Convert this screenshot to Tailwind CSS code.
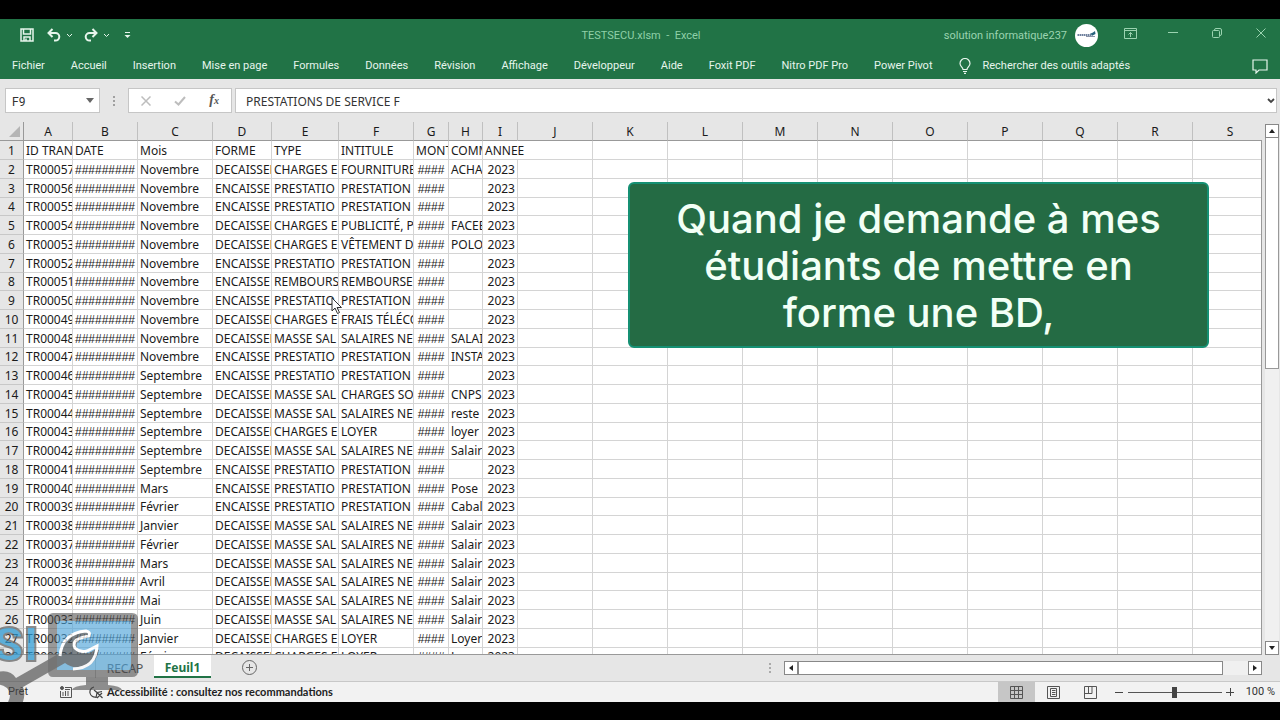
<!DOCTYPE html>
<html lang="fr">
<head>
    <meta charset="UTF-8">
    <meta name="viewport" content="width=device-width, initial-scale=1.0">
    <title>TESTSECU.xlsm - Excel</title>
    <script src="https://cdn.jsdelivr.net/npm/@tailwindcss/browser@4"></script>
</head>
<body class="relative h-screen overflow-hidden flex flex-col bg-black pb-[18px] pt-[19px] font-['Roboto',sans-serif] text-[11px] text-[#333]">

    <!-- Title bar and ribbon tabs -->
    <header class="shrink-0 bg-[#217346] text-[#e6f5ec]">
        <div class="relative flex h-8 items-center justify-between pl-5">
            <div class="flex items-center">
                <button aria-label="Enregistrer" class="mr-3">
                    <svg class="size-[14px]" viewBox="0 0 14 14" fill="none" stroke="currentColor" stroke-width="1.5"><path d="M1 1h12v12H1zM3.5 1v5h7V1M4 13V9h6v4M6 10.500v2.500"/></svg>
                </button>
                <button aria-label="Annuler" class="mr-1">
                    <svg class="w-[16px] h-[14px]" viewBox="0 0 16 14" fill="none" stroke="currentColor" stroke-width="2"><path d="M2 5h7.500a3.800 3.800 0 0 1 0 7.600H8M6.500 1 2.500 5l4 4"/></svg>
                </button>
                <button aria-label="Options d'annulation" class="mr-[10px]">
                    <svg class="w-[7px] h-[5px]" viewBox="0 0 7 5" fill="none" stroke="currentColor"><path d="m1 1 2.500 2.500L6 1"/></svg>
                </button>
                <button aria-label="Rétablir" class="mr-1">
                    <svg class="w-[16px] h-[14px]" viewBox="0 0 16 14" fill="none" stroke="currentColor" stroke-width="2"><path d="M14 5H6.500a3.800 3.800 0 0 0 0 7.600H8M9.500 1l4 4-4 4"/></svg>
                </button>
                <button aria-label="Options de rétablissement" class="mr-[14px]">
                    <svg class="w-[7px] h-[5px]" viewBox="0 0 7 5" fill="none" stroke="currentColor"><path d="m1 1 2.500 2.500L6 1"/></svg>
                </button>
                <button aria-label="Personnaliser la barre">
                    <svg class="w-[7px] h-[7px]" viewBox="0 0 7 7"><path d="M1 .5h5" stroke="currentColor"/><path d="M.5 3h6l-3 3z" fill="currentColor"/></svg>
                </button>
            </div>
            <h1 class="absolute inset-x-0 pt-[3px] pl-[2px] text-center whitespace-pre text-[#8fd0a8] pointer-events-none">TESTSECU.xlsm  -  Excel</h1>
            <div class="flex items-center text-[#9bd3b0]">
                <span class="pt-[3px]">solution informatique237</span>
                <svg class="ml-2 mr-[26px] size-[23px]" viewBox="0 0 23 23"><circle cx="11.500" cy="11.500" r="11.500" fill="#fff"/><path d="M2.500 11h15" stroke="#6d7f9c" stroke-width="2" stroke-dasharray="1.500 .5"/><path d="M11 12.500h9" stroke="#8b94a8" stroke-width="1"/><path d="M15 9.500c2 0 3-1 5-2.500l.5 3-3 1.500z" fill="#27627c"/></svg>
                <button aria-label="Options d'affichage du ruban" class="mr-[31px]">
                    <svg class="mb-1 w-[13px] h-[11px]" viewBox="0 0 13 11" fill="none" stroke="currentColor"><path d="M.5.5h12v10H.5zM.5 2.500h12M6.500 9V4.500M4.500 6.500l2-2 2 2"/></svg>
                </button>
                <button aria-label="Réduire" class="mr-[34px]">
                    <svg class="mb-1 w-[10px] h-[10px]" viewBox="0 0 10 10" stroke="currentColor"><path d="M0 4.500h10"/></svg>
                </button>
                <button aria-label="Restaurer" class="mr-[34px]">
                    <svg class="mb-1 w-[10px] h-[10px]" viewBox="0 0 10 10" fill="none" stroke="currentColor"><rect x=".5" y="2.500" width="7" height="7" rx="1"/><path d="M2.500 2.500V2A1.500 1.500 0 0 1 4 .5h4A1.500 1.500 0 0 1 9.500 2v4A1.500 1.500 0 0 1 8 7.500"/></svg>
                </button>
                <button aria-label="Fermer" class="mr-[14px]">
                    <svg class="mb-1 w-[10px] h-[10px]" viewBox="0 0 10 10" stroke="currentColor"><path d="m.5.5 9 9m0-9-9 9"/></svg>
                </button>
            </div>
        </div>
        <nav class="flex h-7 items-center justify-between pl-3 pr-3 pt-[2px]">
            <div class="flex items-center gap-[26px] whitespace-nowrap">
                <button>Fichier</button>
                <button>Accueil</button>
                <button>Insertion</button>
                <button>Mise en page</button>
                <button>Formules</button>
                <button>Données</button>
                <button>Révision</button>
                <button>Affichage</button>
                <button>Développeur</button>
                <button>Aide</button>
                <button>Foxit PDF</button>
                <button>Nitro PDF Pro</button>
                <button>Power Pivot</button>
                <button class="flex items-center gap-3">
                    <svg class="w-[12px] h-[16px]" viewBox="0 0 12 16" fill="none" stroke="currentColor" stroke-width="1.200"><path d="M4 11.500C4 9 1 8.500 1 5.500a5 5 0 0 1 10 0C11 8.500 8 9 8 11.500zM4 13.500h4M5 15.300h2"/></svg>
                    Rechercher des outils adaptés
                </button>
            </div>
            <button aria-label="Commentaires">
                <svg class="w-[16px] h-[15px]" viewBox="0 0 16 15" fill="none" stroke="currentColor" stroke-width="1.200"><path d="M1 1h14v10H7l-3 3v-3H1z"/></svg>
            </button>
        </nav>
    </header>

    <!-- Formula bar -->
    <div class="flex shrink-0 h-[43px] items-center bg-[#e6e6e6] pl-[5px] pr-[3px]">
        <div class="flex h-[25px] w-[95px] items-center border border-[#c6c6c6] bg-white pr-[5px]">
            <input aria-label="Zone Nom" value="F9" class="w-full min-w-0 pt-[2px] pl-[6px] text-[12px] outline-none">
            <svg class="w-[8px] h-[5px] shrink-0" viewBox="0 0 8 5"><path d="M0 0h8L4 5z" fill="#666"/></svg>
        </div>
        <svg class="mx-3 w-[4px] h-[10px]" viewBox="0 0 4 10" fill="#a0a0a0"><path d="M1 0h2v2H1zM1 4h2v2H1zM1 8h2v2H1z"/></svg>
        <div class="flex h-[25px] w-[104px] items-center justify-between border border-[#c6c6c6] bg-white pl-3 pr-3">
            <button aria-label="Annuler la saisie"><svg class="size-[10px]" viewBox="0 0 10 10" stroke="#bdbdbd" stroke-width="1.500"><path d="m.5.5 9 9m0-9-9 9"/></svg></button>
            <button aria-label="Valider"><svg class="w-[12px] h-[10px]" viewBox="0 0 12 10" fill="none" stroke="#bdbdbd" stroke-width="2"><path d="m1 5.500 3.500 3L11 1"/></svg></button>
            <button aria-label="Insérer une fonction" class="font-['Liberation_Serif',serif] text-sm leading-4 font-bold italic text-[#555]">f<span class="text-[10px]">x</span></button>
        </div>
        <div class="ml-[3px] flex h-[25px] flex-1 items-center border border-[#c6c6c6] bg-white pr-[1px]">
            <input aria-label="Barre de formule" value="PRESTATIONS DE SERVICE F" class="w-full min-w-0 pt-[2px] pl-[10px] font-['Noto_Sans',sans-serif] text-[12px] outline-none">
            <svg class="w-[8px] h-[6px] shrink-0" viewBox="0 0 8 6" fill="none" stroke="#444" stroke-width="1.800"><path d="m1 1 3 3 3-3"/></svg>
        </div>
    </div>

    <!-- Worksheet -->
    <main class="flex min-h-0 flex-1 bg-[#e6e6e6]">
        <div class="relative min-w-0 flex-1 overflow-hidden border-b border-[#999]">
            <table class="w-[1268px] min-w-full table-fixed border-separate border-spacing-0 font-['Noto_Sans',sans-serif] text-[12px] leading-[16px] whitespace-nowrap text-[#1a1a1a]">
                <colgroup>
                    <col class="w-[24px]"><col class="w-[49px]"><col class="w-[65px]"><col class="w-[75px]"><col class="w-[59px]"><col class="w-[67px]"><col class="w-[75px]"><col class="w-[35px]"><col class="w-[34px]"><col class="w-[35px]"><col class="w-[75px]"><col class="w-[75px]"><col class="w-[75px]"><col class="w-[75px]"><col class="w-[75px]"><col class="w-[75px]"><col class="w-[75px]"><col class="w-[75px]"><col class="w-[75px]"><col class="w-[75px]">
                </colgroup>
                <thead>
                    <tr id="columns"></tr>
                </thead>
                <tbody id="cells"></tbody>
            </table>
            <div class="absolute top-[19px] right-0 bottom-0 w-px bg-[#999]"></div>
        </div>
        <div class="flex w-[18px] flex-col bg-[#e6e6e6] pt-[2px] pl-[3px] pr-px">
            <button aria-label="Défiler vers le haut" class="flex h-[14px] shrink-0 items-center justify-center border border-[#888] bg-white"><svg class="w-[6px] h-[4px]" viewBox="0 0 6 4"><path d="M3 0 6 4H0z" fill="#222"/></svg></button>
            <div class="flex-1 bg-[#f0f0f0]"><div class="h-[46%] border border-t-0 border-[#999] bg-white"></div></div>
            <button aria-label="Défiler vers le bas" class="flex h-[14px] shrink-0 items-center justify-center border border-[#888] bg-white"><svg class="w-[6px] h-[4px]" viewBox="0 0 6 4"><path d="M0 0h6L3 4z" fill="#222"/></svg></button>
        </div>
    </main>

    <!-- Sheet tabs and horizontal scroll bar -->
    <div class="flex h-[26px] shrink-0 items-start bg-[#e6e6e6]">
        <div class="flex flex-1 items-start font-['Noto_Sans',sans-serif] text-[12px]">
            <button class="ml-[95px] h-[23px] w-[59px] border-l border-[#bbb] pt-[4px] text-[#555]">RECAP</button>
            <button class="h-[23px] w-[57px] border-b-2 border-[#217346] bg-white pt-[4px] font-bold text-[#217346]">Feuil1</button>
            <button aria-label="Nouvelle feuille" class="ml-[31px] mt-[5px]"><svg class="size-[15px]" viewBox="0 0 15 15" fill="none" stroke="#666"><circle cx="7.500" cy="7.500" r="7"/><path d="M7.500 4v7M4 7.500h7"/></svg></button>
        </div>
        <svg class="mt-2 mr-[13px] w-[2px] h-[10px]" viewBox="0 0 2 10" fill="#aaa"><path d="M0 0h2v2H0zM0 4h2v2H0zM0 8h2v2H0z"/></svg>
        <div class="mt-[6px] mr-[18px] flex h-[14px] w-[478px] bg-[#f0f0f0]">
            <button aria-label="Défiler à gauche" class="flex w-[14px] items-center justify-center border border-[#888] bg-white"><svg class="w-[4px] h-[6px]" viewBox="0 0 4 6"><path d="M4 0v6L0 3z" fill="#222"/></svg></button>
            <div class="w-[425px] border border-[#888] bg-white"></div>
            <button aria-label="Défiler à droite" class="ml-auto flex w-[14px] items-center justify-center border border-[#888] bg-white"><svg class="w-[4px] h-[6px]" viewBox="0 0 4 6"><path d="M0 0v6l4-3z" fill="#222"/></svg></button>
        </div>
    </div>

    <!-- Status bar -->
    <footer class="flex h-[21px] shrink-0 items-center border-t border-[#c8c8c8] bg-[#f2f2f2] pl-2">
        <span class="w-[52px]">Prêt</span>
        <svg class="mr-[17px] w-[12px] h-[12px]" viewBox="0 0 12 12" fill="none" stroke="#555"><circle cx="2" cy="2" r="1.500" fill="#555"/><path d="M5 1.500h6.500v10H.5V5M3 6v4M5.500 5v5M8 5v5M5 3.500h5"/></svg>
        <svg class="mr-[3px] w-[15px] h-[13px]" viewBox="0 0 15 13" fill="none" stroke="#444" stroke-width="1.200"><path d="M5 1a5 5 0 0 0 2 10M5 4l3 2.500 5-1M8 6.500 7 12M8.500 7l5 5M13 7l-5 5" /></svg>
        <button class="flex-1 text-left font-['Lato',sans-serif] font-bold text-[#222]">Accessibilité : consultez nos recommandations</button>
        <button aria-label="Normal" class="flex h-full w-[37px] items-center justify-center bg-[#c6c6c6]"><svg class="size-[13px]" viewBox="0 0 13 13" fill="none" stroke="#555"><path d="M.5.5h12v12H.5zM4.500.5v12M8.500.5v12M.5 4.500h12M.5 8.500h12"/></svg></button>
        <button aria-label="Mise en page" class="flex h-full w-[37px] items-center justify-center"><svg class="size-[13px]" viewBox="0 0 13 13" fill="none" stroke="#555"><path d="M.5.5h12v12H.5zM3.500 2.500h6v8h-6zM5 4.500h3.500M5 6.500h3.500M5 8.500h3.500"/></svg></button>
        <button aria-label="Aperçu des sauts de page" class="flex h-full w-[38px] items-center justify-center"><svg class="size-[13px]" viewBox="0 0 13 13" fill="none" stroke="#555"><path d="M.5.5h12v12H.5zM.5 7.500h7.500v-7M4.500.5v7"/></svg></button>
        <button aria-label="Zoom arrière" class="ml-[5px] mr-[5px]"><svg class="size-[8px]" viewBox="0 0 8 8" stroke="#444"><path d="M0 4.500h8"/></svg></button>
        <input type="range" aria-label="Zoom" min="0" max="200" value="100" class="h-[12px] w-[94px] appearance-none bg-[linear-gradient(#555,#555)] bg-[length:100%_1px] bg-center bg-no-repeat [&::-webkit-slider-thumb]:h-[11px] [&::-webkit-slider-thumb]:w-[5px] [&::-webkit-slider-thumb]:appearance-none [&::-webkit-slider-thumb]:bg-[#444]">
        <button aria-label="Zoom avant" class="ml-[4px] mr-3"><svg class="size-[8px]" viewBox="0 0 8 8" stroke="#444"><path d="M0 4.500h8M4.500 0v8"/></svg></button>
        <span class="mr-[5px] whitespace-nowrap">100 %</span>
    </footer>

    <!-- Caption -->
    <div class="absolute top-[182px] left-[628px] flex h-[166px] w-[581px] items-center justify-center rounded-md border-2 border-[#159073] bg-[#246b44] text-center font-['Inter',sans-serif] text-[40px] font-medium leading-[47px] text-[#f2fff6]">
        <p>Quand je demande à mes<br>étudiants de mettre en<br>forme une BD,</p>
    </div>

    <!-- Mouse pointer -->
    <svg class="absolute top-[297px] left-[331px] w-[12px] h-[18px]" viewBox="0 0 12 18"><path d="M1 1v13l3-3 2.500 5.500 2-1L6 10.500h4.500z" fill="#fff" stroke="#333"/></svg>

    <!-- Channel logo -->
    <svg class="pointer-events-none absolute bottom-[18px] left-0 h-[92px] w-[140px] opacity-75" viewBox="0 610 140 92">
        <path fill-rule="evenodd" d="M53 613h79q6 0 6 6v52q0 6-6 6H53q-5 0-5-6v-52q0-6 5-6zM57 621v49h74v-49z" fill="#4a4a4a" fill-opacity=".75"/>
        <path d="M57 621h74v49H57z" fill="#4ea3d8" fill-opacity=".85"/>
        <path d="M86 677h22v8q13 1 14 5H72q1-4 14-5z" fill="#4a4a4a" fill-opacity=".8"/>
        <path d="M-2 672q12-3 18 6l44-25q5-20 27-22 4 1 3 5-16 4-13 12 6 8 14 4l5-3 3 1q-3 16-20 17-8 1-14-4l-42 24q3 9-1 17h-15q6-10 0-16-5-4-9-3z" fill="#4a4a4a" fill-opacity=".85"/>
        <path d="M60 656q2-23 26-25 5 1 3 5-19 3-14 12 5 5 12 3l10-5q-1 22-24 23" fill="none" stroke="#fff" stroke-width="3"/>
        <text x="-7" y="661" font-family="Roboto, sans-serif" font-weight="900" font-size="49" fill="#2f9ad2" stroke="#666" stroke-width="2">SI</text>
    </svg>

    <script>
        // date and amount columns are too narrow, so they show as hashes
        const rows = [
            ['TR00057', 'Novembre', 'DECAISSEMENT', 'CHARGES E', 'FOURNITURE', 'ACHA'],
            ['TR00056', 'Novembre', 'ENCAISSE', 'PRESTATIO', 'PRESTATION', ''],
            ['TR00055', 'Novembre', 'ENCAISSE', 'PRESTATIO', 'PRESTATION', ''],
            ['TR00054', 'Novembre', 'DECAISSEMENT', 'CHARGES E', 'PUBLICITÉ, P', 'FACEB'],
            ['TR00053', 'Novembre', 'DECAISSEMENT', 'CHARGES E', 'VÊTEMENT D', 'POLO'],
            ['TR00052', 'Novembre', 'ENCAISSE', 'PRESTATIO', 'PRESTATION', ''],
            ['TR00051', 'Novembre', 'ENCAISSE', 'REMBOURS', 'REMBOURSE', ''],
            ['TR00050', 'Novembre', 'ENCAISSE', 'PRESTATIO', 'PRESTATION', ''],
            ['TR00049', 'Novembre', 'DECAISSEMENT', 'CHARGES E', 'FRAIS TÉLÉCO', ''],
            ['TR00048', 'Novembre', 'DECAISSEMENT', 'MASSE SAL', 'SALAIRES NE', 'SALAI'],
            ['TR00047', 'Novembre', 'ENCAISSE', 'PRESTATIO', 'PRESTATION', 'INSTA'],
            ['TR00046', 'Septembre', 'ENCAISSE', 'PRESTATIO', 'PRESTATION', ''],
            ['TR00045', 'Septembre', 'DECAISSEMENT', 'MASSE SAL', 'CHARGES SO', 'CNPS'],
            ['TR00044', 'Septembre', 'DECAISSEMENT', 'MASSE SAL', 'SALAIRES NE', 'reste'],
            ['TR00043', 'Septembre', 'DECAISSEMENT', 'CHARGES E', 'LOYER', 'loyer'],
            ['TR00042', 'Septembre', 'DECAISSEMENT', 'MASSE SAL', 'SALAIRES NE', 'Salair'],
            ['TR00041', 'Septembre', 'ENCAISSE', 'PRESTATIO', 'PRESTATION', ''],
            ['TR00040', 'Mars', 'ENCAISSE', 'PRESTATIO', 'PRESTATION', 'Pose'],
            ['TR00039', 'Février', 'ENCAISSE', 'PRESTATIO', 'PRESTATION', 'Cabal'],
            ['TR00038', 'Janvier', 'DECAISSEMENT', 'MASSE SAL', 'SALAIRES NE', 'Salair'],
            ['TR00037', 'Février', 'DECAISSEMENT', 'MASSE SAL', 'SALAIRES NE', 'Salair'],
            ['TR00036', 'Mars', 'DECAISSEMENT', 'MASSE SAL', 'SALAIRES NE', 'Salair'],
            ['TR00035', 'Avril', 'DECAISSEMENT', 'MASSE SAL', 'SALAIRES NE', 'Salair'],
            ['TR00034', 'Mai', 'DECAISSEMENT', 'MASSE SAL', 'SALAIRES NE', 'Salair'],
            ['TR00033', 'Juin', 'DECAISSEMENT', 'MASSE SAL', 'SALAIRES NE', 'Salair'],
            ['TR00032', 'Janvier', 'DECAISSEMENT', 'CHARGES E', 'LOYER', 'Loyer'],
            ['TR00031', 'Février', 'DECAISSEMENT', 'CHARGES E', 'LOYER', 'Loyer'],
        ];

        const letters = 'ABCDEFGHIJKLMNOPQRS'.split('');
        const corner = '<th class="h-[19px] border-r border-b border-[#999] p-0"><svg class="ml-auto mr-[3px] block size-[11px]" viewBox="0 0 11 11"><path d="M11 0v11H0z" fill="#b5b5b5"/></svg></th>';
        document.getElementById('columns').innerHTML = corner + letters.map(l =>
            `<th scope="col" class="h-[19px] border-r border-b border-r-[#c0c0c0] border-b-[#999] bg-[#e6e6e6] p-0 pt-[2px] font-normal">${l}</th>`).join('');

        const cell = 'overflow-hidden border-r border-b border-[#d4d4d4] bg-white p-0 pt-px pl-[2px]';
        const hash = "overflow-hidden border-r border-b border-[#d4d4d4] bg-white p-0 pt-px text-center font-['Liberation_Sans',sans-serif]";
        const year = 'overflow-hidden border-r border-b border-[#d4d4d4] bg-white p-0 pt-px pr-[2px] text-right';
        const spill = 'relative overflow-visible border-b border-[#d4d4d4] bg-white p-0 pt-px pl-[2px]';
        const td = (cls, text) => `<td class="${cls}">${text}</td>`;
        const blanks = td(cell, '').repeat(10);

        const titles = ['ID TRAN', 'DATE', 'Mois', 'FORME', 'TYPE', 'INTITULE', 'MONT', 'COMM'];
        const lines = [titles.map(t => td(cell, t)).join('') + td(spill, 'ANNEE')];
        rows.forEach(([id, month, form, type, label, comment]) => {
            lines.push(td(cell, id) + td(hash, '#########') + td(cell, month) + td(cell, form) +
                td(cell, type) + td(cell, label) + td(hash, '####') + td(cell, comment) + td(year, '2023'));
        });
        document.getElementById('cells').innerHTML = lines.map((line, i) =>
            `<tr class="h-[19px] nth-[4n]:h-[18px]"><th scope="row" class="border-r border-b border-r-[#999] border-b-[#c8c8c8] bg-[#e6e6e6] p-0 pt-px font-normal">${i + 1}</th>${line}${blanks}</tr>`).join('');
    </script>
</body>
</html>
